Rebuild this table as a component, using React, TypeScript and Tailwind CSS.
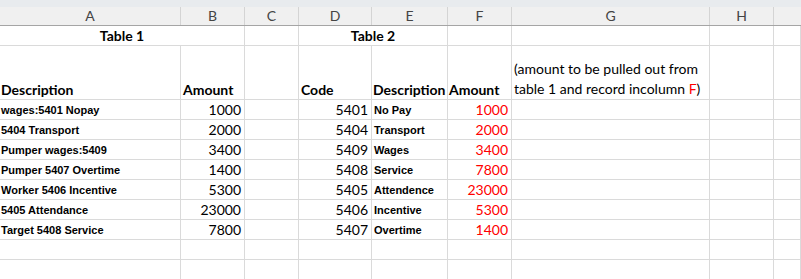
import React from "react";

const cal = "font-['Lato','Open_Sans',sans-serif]";
const ari = "font-['Liberation_Sans',Arial,sans-serif]";
const cols = "grid grid-cols-[181px_64px_54px_73px_76px_64px_198px_64px_1fr]";
const cell = "border-r border-b border-[#dadada] flex items-end overflow-hidden whitespace-nowrap";

const t1 = [
  ["wages:5401 Nopay", "1000"],
  ["5404 Transport", "2000"],
  ["Pumper wages:5409", "3400"],
  ["Pumper 5407 Overtime", "1400"],
  ["Worker 5406 Incentive", "5300"],
  ["5405 Attendance", "23000"],
  ["Target 5408 Service", "7800"],
];
const t2 = [
  ["5401", "No Pay", "1000"],
  ["5404", "Transport", "2000"],
  ["5409", "Wages", "3400"],
  ["5408", "Service", "7800"],
  ["5405", "Attendence", "23000"],
  ["5406", "Incentive", "5300"],
  ["5407", "Overtime", "1400"],
];

export default function App() {
  const letters = ["A", "B", "C", "D", "E", "F", "G", "H", ""];
  return (
    <div className="w-[801px] h-[279px] overflow-hidden bg-white text-black">
      <div className="h-[7px] bg-[#e8ebee]" />
      <div className={`${cols} h-[19px] bg-[#f0f0f0] border-b border-[#a5a5a5]`}>
        {letters.map((l, i) => (
          <div
            key={i}
            className={`${cal} flex items-center justify-center text-[14px] leading-none text-[#444] ${i < 8 ? "border-r border-[#d4d4d4]" : ""}`}
          >
            {l}
          </div>
        ))}
      </div>
      {/* Row 1 */}
      <div className={`${cols} h-[20px]`}>
        <div className={`${cell} col-span-2 justify-center ${cal} font-bold text-[14px] leading-[18px]`}>Table 1</div>
        <div className={cell} />
        <div className={`${cell} col-span-2 justify-center ${cal} font-bold text-[14px] leading-[18px]`}>Table 2</div>
        <div className={cell} />
        <div className={cell} />
        <div className={cell} />
        <div className={cell} />
      </div>
      {/* Row 2 */}
      <div className={`${cols} h-[54px]`}>
        <div className={`${cell} ${cal} font-bold text-[14px] leading-[18px] pl-[1px]`}>Description</div>
        <div className={`${cell} ${cal} font-bold text-[14px] leading-[18px] pl-[2px]`}>Amount</div>
        <div className={cell} />
        <div className={`${cell} ${cal} font-bold text-[14px] leading-[18px] pl-[2px]`}>Code</div>
        <div className={`${cell} ${cal} font-bold text-[14px] leading-[18px] pl-[1px]`}>Description</div>
        <div className={`${cell} ${cal} font-bold text-[14px] leading-[18px] pl-[1px]`}>Amount</div>
        <div className={`${cell} ${cal} text-[14px] leading-[20px] pl-[2px] whitespace-normal`}>
          <div>
            (amount to be pulled out from
            <br />
            table 1 and record incolumn <span className="text-[#ff0000]">F</span>)
          </div>
        </div>
        <div className={cell} />
        <div className={cell} />
      </div>
      {/* Data rows */}
      {Array.from({ length: 9 }).map((_, r) => {
        const a = t1[r];
        const b = t2[r];
        return (
          <div key={r} className={`${cols} h-[20px]`}>
            <div className={`${cell} ${ari} font-bold text-[11px] leading-[17px] pl-[1px]`}>{a ? a[0] : ""}</div>
            <div className={`${cell} justify-end ${cal} text-[14px] leading-[18px] pr-[3px]`}>{a ? a[1] : ""}</div>
            <div className={cell} />
            <div className={`${cell} justify-end ${cal} text-[14px] leading-[18px] pr-[3px]`}>{b ? b[0] : ""}</div>
            <div className={`${cell} ${ari} font-bold text-[11px] leading-[17px] pl-[2px]`}>{b ? b[1] : ""}</div>
            <div className={`${cell} justify-end ${cal} text-[14px] leading-[18px] pr-[3px] text-[#ff0000]`}>{b ? b[2] : ""}</div>
            <div className={cell} />
            <div className={cell} />
            <div className={cell} />
          </div>
        );
      })}
    </div>
  );
}
